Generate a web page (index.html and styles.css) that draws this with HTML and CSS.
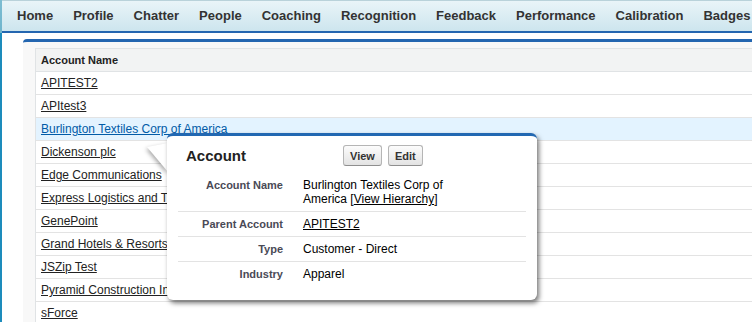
FILE: index.html
```html
<!DOCTYPE html>
<html>
<head>
<meta charset="utf-8">
<link rel="stylesheet" href="styles.css">
</head>
<body>
<div class="page">
  <div class="strip"></div>
  <div class="main">
    <nav class="tabs">
      <span class="tab">Home</span>
      <span class="tab">Profile</span>
      <span class="tab">Chatter</span>
      <span class="tab">People</span>
      <span class="tab">Coaching</span>
      <span class="tab">Recognition</span>
      <span class="tab">Feedback</span>
      <span class="tab">Performance</span>
      <span class="tab">Calibration</span>
      <span class="tab">Badges</span>
    </nav>
    <div class="content">
      <div class="panel">
        <div class="list">
          <div class="list-head">Account Name</div>
          <div class="list-row"><a class="acc">APITEST2</a></div>
          <div class="list-row"><a class="acc">APItest3</a></div>
          <div class="list-row hover"><a class="acc">Burlington Textiles Corp of America</a></div>
          <div class="list-row"><a class="acc">Dickenson plc</a></div>
          <div class="list-row"><a class="acc">Edge Communications</a></div>
          <div class="list-row"><a class="acc">Express Logistics and Transport</a></div>
          <div class="list-row"><a class="acc">GenePoint</a></div>
          <div class="list-row"><a class="acc">Grand Hotels &amp; Resorts Ltd</a></div>
          <div class="list-row"><a class="acc">JSZip Test</a></div>
          <div class="list-row"><a class="acc">Pyramid Construction Inc.</a></div>
          <div class="list-row"><a class="acc">sForce</a></div>
        </div>
      </div>
    </div>
  </div>
</div>

<svg class="arrow" width="26" height="36" viewBox="0 0 26 36">
  <polygon points="3,6 24,2 24,31" fill="#fff"/>
</svg>
<div class="popup">
  <div class="pop-head">
    <h2 class="pop-title">Account</h2>
    <div class="pop-buttons">
      <button class="btn">View</button>
      <button class="btn">Edit</button>
    </div>
  </div>
  <div class="detail">
    <div class="drow">
      <div class="dlabel">Account Name</div>
      <div class="dvalue">Burlington Textiles Corp of America [<a class="lnk">View Hierarchy</a>]</div>
    </div>
    <div class="drow">
      <div class="dlabel">Parent Account</div>
      <div class="dvalue"><a class="lnk">APITEST2</a></div>
    </div>
    <div class="drow">
      <div class="dlabel">Type</div>
      <div class="dvalue">Customer - Direct</div>
    </div>
    <div class="drow last">
      <div class="dlabel">Industry</div>
      <div class="dvalue">Apparel</div>
    </div>
  </div>
</div>
</body>
</html>
```

FILE: styles.css
```css
html, body {
  margin: 0;
  padding: 0;
  background: #fff;
  font-family: "Liberation Sans", Arial, sans-serif;
  overflow: hidden;
  width: 752px;
  height: 322px;
}

.page {
  display: flex;
  width: 752px;
  height: 322px;
}

.strip {
  width: 2px;
  flex: 0 0 2px;
  background: linear-gradient(to bottom, #7dbdd2 0, #6fb4cc 33px, #1d8cbc 33px, #1d8cbc 100%);
}

.main {
  flex: 1;
  min-width: 0;
  display: flex;
  flex-direction: column;
}

.tabs {
  display: flex;
  height: 30px;
  padding-left: 5px;
  border-top: 1px solid #b9d2da;
  border-bottom: 2px solid #2466b0;
  background: linear-gradient(to bottom, #e9f4f8, #cde5ee);
  align-items: center;
  white-space: nowrap;
}

.tab {
  padding: 0 10px;
  font-size: 13px;
  font-weight: bold;
  color: #333;
  line-height: 30px;
}

.content {
  padding: 6px 0 0 21px;
  flex: 1;
}

.panel {
  background: #f8f8f8;
  border-top: 3px solid #2466b0;
  border-top-left-radius: 4px;
  padding: 6px 0 0 12px;
  height: 100%;
}

.list {
  background: #fff;
  border-left: 1px solid #e0e3e5;
  border-top: 1px solid #e0e3e5;
}

.list-head {
  height: 22px;
  line-height: 22px;
  background: #f2f3f3;
  border-bottom: 1px solid #e0e3e5;
  padding-left: 5px;
  font-size: 11px;
  font-weight: bold;
  color: #222;
}

.list-row {
  height: 22px;
  line-height: 22px;
  border-bottom: 1px solid #e3e3e3;
  padding-left: 5px;
  font-size: 12px;
}

.list-row.hover {
  background: #e3f3ff;
}

.acc {
  color: #222;
  text-decoration: underline;
}

.list-row.hover .acc {
  color: #015ba7;
}

.arrow {
  position: absolute;
  left: 144px;
  top: 141px;
  filter: drop-shadow(-1px 2px 2px rgba(0, 0, 0, 0.35));
}

.popup {
  position: absolute;
  left: 167px;
  top: 133px;
  width: 370px;
  height: 164px;
  background: #fff;
  border-top: 3px solid #2268b2;
  border-radius: 6px;
  box-shadow: 2px 3px 5px rgba(0, 0, 0, 0.55);
}

.pop-head {
  display: grid;
  grid-template-columns: 157px auto;
  align-items: center;
  padding: 9px 0 0 19px;
  height: 21px;
  margin-bottom: 7px;
}

.pop-title {
  margin: 0;
  font-size: 15px;
  font-weight: bold;
  color: #222;
}

.pop-buttons {
  display: flex;
  gap: 6px;
}

.btn {
  font-family: "Liberation Sans", Arial, sans-serif;
  font-size: 11px;
  font-weight: bold;
  color: #333;
  height: 21px;
  padding: 0 6px;
  border: 1px solid #b5b5b5;
  border-bottom-color: #8f8f8f;
  border-radius: 3px;
  background: linear-gradient(to bottom, #fcfcfc, #e3e3e3);
}

.detail {
  margin: 0 11px;
}

.drow {
  display: grid;
  grid-template-columns: 105px 165px;
  column-gap: 20px;
  padding: 5px 0 5px;
  border-bottom: 1px solid #e3e3e3;
  line-height: 14px;
}

.drow.last {
  border-bottom: none;
}

.dlabel {
  text-align: right;
  font-size: 11px;
  font-weight: bold;
  color: #4a4a56;
}

.dvalue {
  font-size: 12px;
  color: #000;
}

.lnk {
  color: #000;
  text-decoration: underline;
}
```
